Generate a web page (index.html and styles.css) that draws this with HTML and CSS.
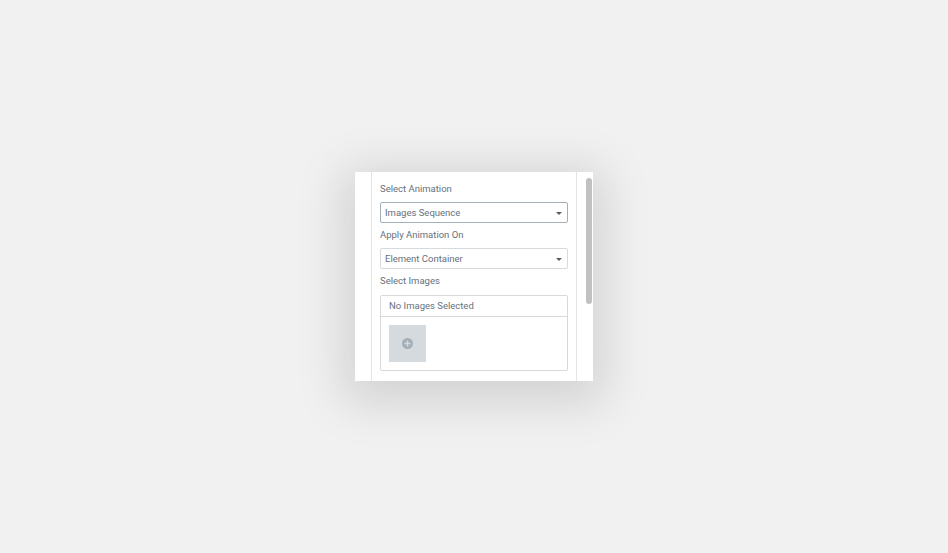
FILE: index.html
```html
<!DOCTYPE html>
<html lang="en">
<head>
<meta charset="utf-8">
<title>Animation settings</title>
<link rel="stylesheet" href="styles.css">
</head>
<body>
<div class="stage">
  <div class="panel">
    <div class="gutter"></div>
    <div class="content">
      <div class="label">Select Animation</div>
      <div class="select select-active">
        <span class="value">Images Sequence</span>
        <span class="caret"></span>
      </div>
      <div class="label">Apply Animation On</div>
      <div class="select">
        <span class="value">Element Container</span>
        <span class="caret"></span>
      </div>
      <div class="label">Select Images</div>
      <div class="gallery">
        <div class="gallery-head">No Images Selected</div>
        <div class="gallery-body">
          <div class="thumb">
            <svg class="plus" width="11" height="11" viewBox="0 0 11 11" aria-hidden="true">
              <circle cx="5.5" cy="5.5" r="5.5" fill="#a4afb7"/>
              <rect x="2.6" y="4.8" width="5.8" height="1.4" fill="#d5dadf"/>
              <rect x="4.8" y="2.6" width="1.4" height="5.8" fill="#d5dadf"/>
            </svg>
          </div>
        </div>
      </div>
    </div>
    <div class="scroll">
      <div class="thumb-bar"></div>
    </div>
  </div>
</div>
</body>
</html>
```
FILE: styles.css
```css
html, body {
  margin: 0;
  padding: 0;
}
body {
  background: #f1f1f1;
  font-family: Roboto, "Liberation Sans", Arial, sans-serif;
  color: #6d7882;
}
.stage {
  width: 948px;
  height: 553px;
  display: flex;
  align-items: center;
  justify-content: center;
}
.panel {
  width: 238px;
  height: 209px;
  background: #ffffff;
  display: flex;
  overflow: hidden;
  box-shadow: 0 10px 45px 12px rgba(0, 0, 0, 0.13);
}
.gutter {
  width: 16px;
  flex: none;
}
.content {
  width: 188px;
  flex: none;
  border-left: 1px solid #e4e4e4;
  border-right: 1px solid #e4e4e4;
  padding: 11px 8px 0 8px;
}
.label {
  font-size: 9.5px;
  line-height: 12px;
  height: 12px;
  color: #66717b;
}
.select {
  margin-top: 7px;
  margin-bottom: 6px;
  height: 19px;
  border: 1px solid #d5dadf;
  border-radius: 2px;
  display: flex;
  align-items: center;
  justify-content: space-between;
  padding: 0 5px 0 4px;
}
.select-active {
  border-color: #a4afb7;
}
.value {
  font-size: 9.5px;
  line-height: 12px;
  color: #66717b;
}
.caret {
  width: 0;
  height: 0;
  border-left: 3px solid transparent;
  border-right: 3px solid transparent;
  border-top: 3px solid #555d66;
  margin-top: 1px;
}
.gallery {
  margin-top: 8px;
  border: 1px solid #d5dadf;
  border-radius: 2px;
}
.gallery-head {
  height: 20px;
  line-height: 20px;
  padding-left: 8px;
  font-size: 9.5px;
  color: #66717b;
  border-bottom: 1px solid #d5dadf;
}
.gallery-body {
  padding: 8px;
  height: 37px;
}
.thumb {
  width: 37px;
  height: 37px;
  background: #d5dadf;
  display: flex;
  align-items: center;
  justify-content: center;
}
.scroll {
  flex: none;
  width: 16px;
  box-sizing: border-box;
  padding: 6px 0 0 9px;
}
.thumb-bar {
  width: 6px;
  height: 126px;
  background: #c1c1c1;
  border-radius: 3px;
}
```
